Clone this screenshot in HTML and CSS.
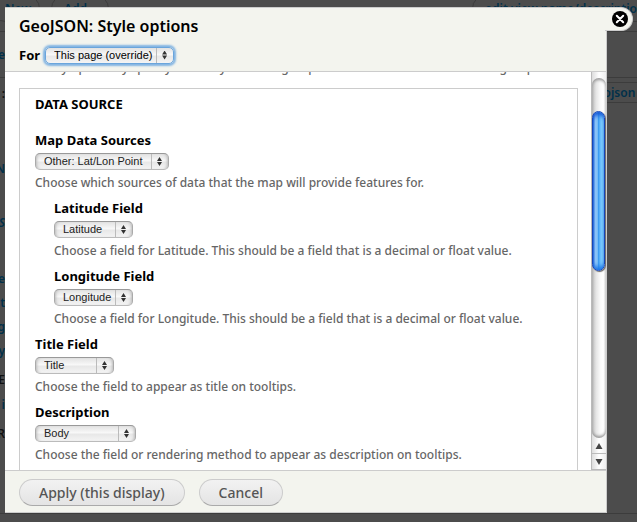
FILE: index.html
```html
<!DOCTYPE html>
<html lang="en">
<head>
<meta charset="utf-8">
<title>GeoJSON: Style options</title>
<link rel="stylesheet" href="styles.css">
</head>
<body>
<div class="backdrop" aria-hidden="true">
  <span class="chip chip-new">New</span>
  <span class="chip chip-add">Add</span>
  <span class="chip chip-edit">edit view name/description</span>
  <span class="rule rule-top"></span>
  <span class="rule rule-mid"></span>
  <span class="rule rule-low"></span>
  <span class="chip chip-path">geojson</span>
  <span class="scrap scrap-a">le</span>
  <span class="scrap scrap-b dark">:</span>
  <span class="scrap scrap-c">N</span>
  <span class="scrap scrap-d"><em>S</em></span>
  <span class="scrap scrap-e">e</span>
  <span class="scrap scrap-f">t</span>
  <span class="scrap scrap-g">g</span>
  <span class="scrap scrap-h">y</span>
  <span class="scrap scrap-i dark">E</span>
  <span class="scrap scrap-j">i</span>
  <span class="scrap scrap-k dark">R</span>
</div>
<form class="dialog" role="dialog" aria-labelledby="dialog-title">
  <button class="close" type="button" aria-label="Close">
    <svg viewBox="0 0 16 16" width="16" height="16"><circle cx="8" cy="8" r="8"/><path d="M4.8 4.8l6.4 6.4M11.2 4.8l-6.4 6.4"/></svg>
  </button>
  <header class="dialog-header">
    <h1 id="dialog-title">GeoJSON: Style options</h1>
    <div class="override">
      <label for="override">For</label>
      <span class="picker picker-focus"><select id="override" class="w-wide"><option>This page (override)</option></select></span>
    </div>
  </header>
  <div class="viewport">
    <div class="content">
      <p class="cut">You may optionally specify a field by which to group the records. Leave blank to not group.</p>
      <fieldset class="panel" aria-labelledby="panel-title">
        <h2 id="panel-title">DATA SOURCE</h2>
        <div class="field">
          <label for="source">Map Data Sources</label>
          <span class="picker"><select id="source" class="w-wide"><option>Other: Lat/Lon Point</option></select></span>
          <p>Choose which sources of data that the map will provide features for.</p>
        </div>
        <div class="field nested">
          <label for="lat">Latitude Field</label>
          <span class="picker"><select id="lat" class="w-small"><option>Latitude</option></select></span>
          <p>Choose a field for Latitude. This should be a field that is a decimal or float value.</p>
        </div>
        <div class="field nested">
          <label for="lon">Longitude Field</label>
          <span class="picker"><select id="lon" class="w-small"><option>Longitude</option></select></span>
          <p>Choose a field for Longitude. This should be a field that is a decimal or float value.</p>
        </div>
        <div class="field">
          <label for="title">Title Field</label>
          <span class="picker"><select id="title" class="w-small"><option>Title</option></select></span>
          <p>Choose the field to appear as title on tooltips.</p>
        </div>
        <div class="field">
          <label for="desc">Description</label>
          <span class="picker"><select id="desc" class="w-medium"><option>Body</option></select></span>
          <p>Choose the field or rendering method to appear as description on tooltips.</p>
        </div>
      </fieldset>
    </div>
    <div class="scrollbar" aria-hidden="true">
      <div class="track"><div class="thumb"></div></div>
      <div class="arrow"><svg viewBox="0 0 8 6" width="8" height="6"><path d="M4 0l3.5 6h-7z"/></svg></div>
      <div class="arrow"><svg viewBox="0 0 8 6" width="8" height="6"><path d="M4 6l3.5-6h-7z"/></svg></div>
    </div>
  </div>
  <footer class="dialog-footer">
    <button type="submit">Apply (this display)</button>
    <button type="button">Cancel</button>
  </footer>
</form>
</body>
</html>
```
FILE: styles.css
```css
* { box-sizing: border-box; }
body {
  margin: 0;
  height: 100vh;
  overflow: hidden;
  background: #4c4c4c;
  color: #000;
  font: 12px/18px "Noto Sans", "Open Sans", sans-serif;
}
.backdrop { position: absolute; inset: 0; overflow: hidden; color: #00304a; font-weight: 600; }
.chip { position: absolute; height: 27px; padding: 4px 12px; border: 1px solid #3c3c3c; border-radius: 14px; }
.chip-new { top: -5px; left: -8px; width: 48px; }
.chip-add { top: -5px; left: 51px; width: 58px; }
.chip-edit { top: -5px; left: 472px; width: 190px; white-space: nowrap; }
.chip-path { top: 82px; right: -6px; width: 60px; height: 21px; padding: 1px 5px; border-radius: 0; }
.rule { position: absolute; left: 0; right: 0; height: 1px; background: #3c3c3c; }
.rule-top { top: 31px; }
.rule-mid { top: 77px; }
.rule-low { top: 513px; }
.scrap { position: absolute; right: calc(100% - 5px); }
.dark { color: #111; }
.scrap-a { top: 46px; }
.scrap-b { top: 85px; }
.scrap-c { top: 160px; }
.scrap-d { top: 214px; }
.scrap-e { top: 270px; }
.scrap-f { top: 294px; }
.scrap-g { top: 318px; }
.scrap-h { top: 342px; }
.scrap-i { top: 371px; }
.scrap-j { top: 396px; }
.scrap-k { top: 425px; }

.dialog {
  position: relative;
  display: flex;
  flex-direction: column;
  height: calc(100vh - 16px);
  margin: 7px 30px 9px 5px;
  border: 1px solid #ccc;
  border-left: 0;
  background: #f3f4ee;
}
.close {
  position: absolute;
  top: -1px;
  right: -27px;
  width: 28px;
  height: 24px;
  padding: 3px 4px 4px 7px;
  border: 1px solid #ccc;
  border-left: 0;
  border-radius: 0 12px 12px 0;
  background: #f3f4ee;
}
.close svg { display: block; }
.close path { fill: none; stroke: #fff; stroke-width: 2; stroke-linecap: round; }
.dialog-header { padding: 7px 14px 7px; border-bottom: 1px solid #ccc; }
h1 { margin: 0; font-size: 16px; line-height: 22px; font-weight: 600; }
.override { display: flex; align-items: center; gap: 5px; margin-top: 9px; font-size: 13px; font-weight: 700; }

.picker { position: relative; display: inline-block; height: 17px; vertical-align: top; }
.picker select {
  appearance: none;
  display: block;
  height: 17px;
  padding: 0 20px 0 8px;
  border: 1px solid #aaa;
  border-color: #999 #aaa #bbb;
  border-radius: 5px;
  background: linear-gradient(#e2e2e2, #f8f8f8 45%, #e8e8e8 55%, #f4f4f4);
  box-shadow: inset 3px 0 3px -2px #bbb, inset -3px 0 3px -2px #bbb;
  color: #222;
  font: 11px/15px "Liberation Sans", Arial, sans-serif;
  outline: 0;
}
.picker::before {
  content: "";
  position: absolute;
  top: 1px;
  right: 17px;
  width: 1px;
  height: 15px;
  background: #bbb;
}
.picker::after {
  content: "";
  position: absolute;
  top: 4px;
  right: 7px;
  width: 5px;
  height: 9px;
  background: #333;
  clip-path: polygon(50% 0, 100% 4px, 0 4px, 0 5px, 100% 5px, 50% 100%, 0 5px, 0 4px);
}
.picker-focus select { border-color: #6aa5dc; box-shadow: 0 0 2px 2px #82b4e2; color: #000; }
.w-wide { width: 134px; }
.override .w-wide { width: 129px; }
.w-small { width: 79px; }
.w-medium { width: 101px; }

.viewport { flex: 1; min-height: 0; display: flex; background: #fff; overflow: hidden; }
.content { flex: 1; min-width: 0; overflow: hidden; padding: 0 13px 0 14px; }
.cut { margin: -12px 0 13px; font-weight: 500; line-height: 15px; white-space: nowrap; overflow: hidden; color: #666; padding-right: 16px; }
.panel { margin: 0; padding: 6px 15px 30px; border: 1px solid #ccc; min-width: 0; }
h2 { margin: 0 0 18px; font-size: 13px; line-height: 18px; font-weight: 700; }
.field { margin-bottom: 7px; }
.nested { margin-left: 19px; }
.field label { display: block; font-size: 13px; line-height: 18px; margin-bottom: 4px; font-weight: 700; }
.field .picker { display: block; width: fit-content; }
.field p { margin: 4px 0 0; font-weight: 500; line-height: 18px; color: #666; white-space: nowrap; }

.scrollbar {
  flex: none;
  width: 15px;
  display: flex;
  flex-direction: column;
  border-left: 1px solid #bbb;
  background: linear-gradient(90deg, #ddd, #fff 50%, #eee);
}
.track {
  flex: 1;
  margin-top: 6px;
  padding-top: 33px;
  border-radius: 7px;
  background: linear-gradient(90deg, #bbb, #e6e6e6 30%, #fafafa 60%, #fff 80%, #e4e4e4);
  box-shadow: inset 0 3px 3px -1px #999, inset 0 -3px 3px -1px #999;
}
.thumb {
  height: 49%;
  margin-right: 1px;
  border: 1px solid #1747b8;
  border-radius: 7px;
  background: linear-gradient(90deg, #2865d8, #9fd0fa 20%, #7cc0f8 40%, #3c9cf2 50%, #7fd0ff 75%, #9be5ff);
  box-shadow: inset 0 4px 4px -1px #1558d8, inset 0 -4px 4px -1px #1e78e8, 1px 1px 1px #666;
}
.arrow { height: 16px; display: flex; align-items: center; justify-content: center; border-bottom: 1px solid #bbb; }
.arrow svg { fill: #444; }

.dialog-footer { display: flex; gap: 14px; padding: 8px 14px 6px; border-top: 1px solid #ccc; }
.dialog-footer button {
  height: 27px;
  padding: 0 19px;
  border: 1px solid #ccc;
  border-bottom-color: #aaa;
  border-radius: 14px;
  background: linear-gradient(#f2f2f2, #e4e4e4);
  color: #555;
  font: 500 14px/20px "Noto Sans", "Open Sans", sans-serif;
}
```
